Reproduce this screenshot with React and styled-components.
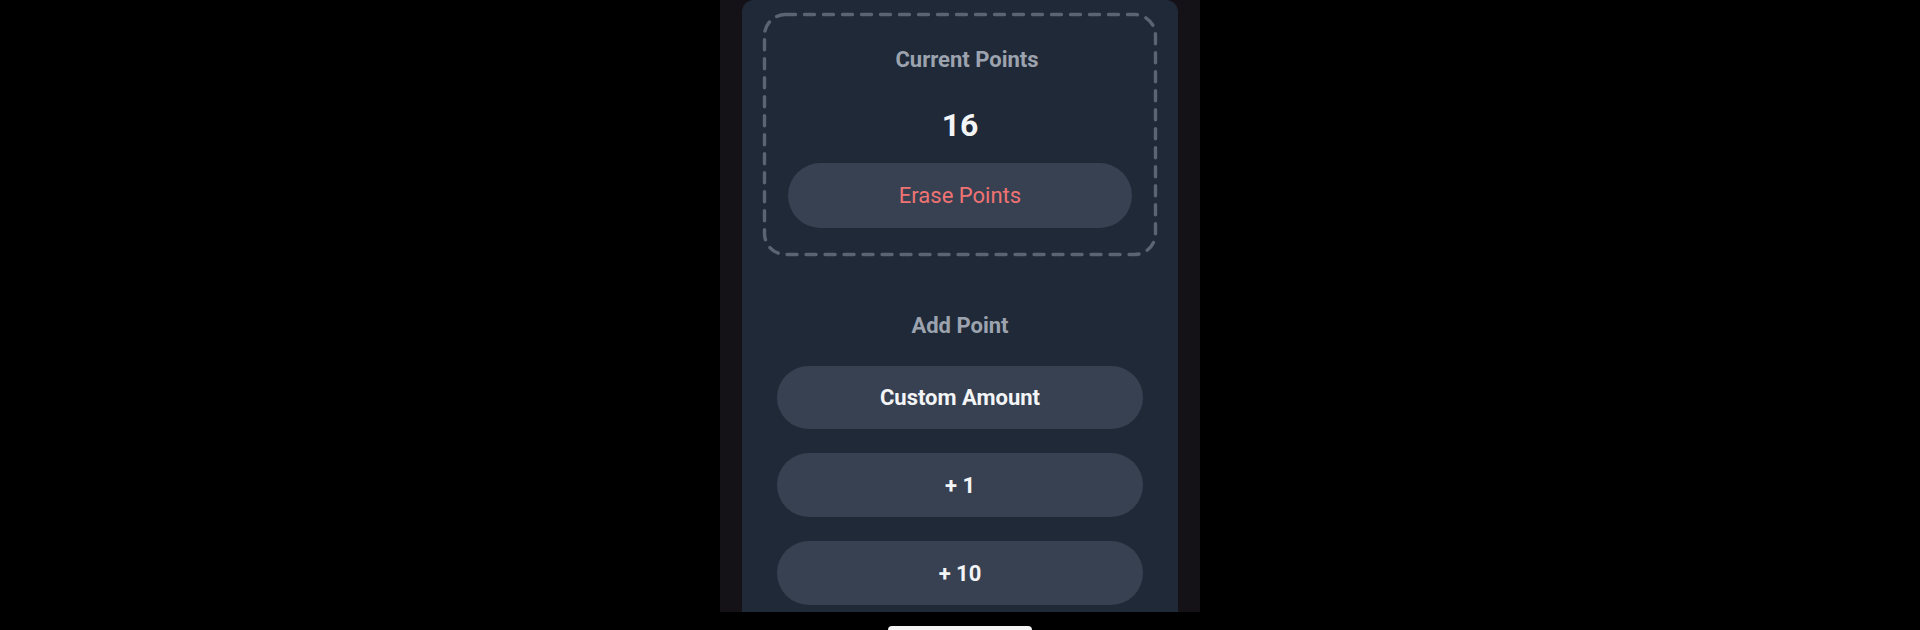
import React from "react";
import styled, { createGlobalStyle } from "styled-components";

const GlobalStyle = createGlobalStyle`
  html, body {
    margin: 0;
    padding: 0;
    background: #000000;
    font-family: Roboto, "Noto Sans", "Liberation Sans", sans-serif;
  }
  * { box-sizing: border-box; }
`;

const Screen = styled.div`
  width: 1920px;
  height: 630px;
  overflow: hidden;
  display: flex;
  flex-direction: column;
  align-items: center;
  background: #000000;
`;

const Frame = styled.div`
  flex-shrink: 0;
  width: 480px;
  height: 612px;
  background: #151217;
  padding: 0 22px;
  display: flex;
`;

const Panel = styled.div`
  flex: 1;
  background: #1f2937;
  border-radius: 12px 12px 0 0;
  padding: 13px 21px 0;
  display: flex;
  flex-direction: column;
  overflow: hidden;
`;

const DashedCard = styled.section`
  position: relative;
  border: 3px solid transparent;
  border-radius: 22px;
  padding: 30px 22px 25px;
  display: flex;
  flex-direction: column;
  align-items: center;
`;

const DashOutline = styled.svg`
  position: absolute;
  top: -3px;
  left: -3px;
  width: calc(100% + 6px);
  height: calc(100% + 6px);
  pointer-events: none;
  overflow: visible;
`;

const DashRect = styled.rect`
  x: 1.5px;
  y: 1.5px;
  width: calc(100% - 3px);
  height: calc(100% - 3px);
  rx: 21px;
  fill: none;
  stroke: #5b6473;
  stroke-width: 3.4px;
  stroke-dasharray: 10 9;
  stroke-linecap: round;
`;

const Label = styled.h2`
  margin: 0;
  margin-left: ${(p) => p.$shift || 0}px;
  font-size: 22px;
  line-height: 28px;
  font-weight: 700;
  color: #9ca3af;
  text-align: center;
`;

const Value = styled.div`
  margin-top: 31px;
  font-size: 32px;
  line-height: 40px;
  font-weight: 700;
  color: #f3f4f6;
  text-align: center;
`;

const PillButton = styled.button`
  width: 100%;
  height: ${(p) => p.$h || 64}px;
  border: none;
  border-radius: 999px;
  background: #374151;
  color: ${(p) => (p.$danger ? "#f07373" : "#f3f4f6")};
  font-family: inherit;
  font-size: 22px;
  font-weight: ${(p) => (p.$danger ? 400 : 700)};
  display: flex;
  align-items: center;
  justify-content: center;
  padding: 0;
  cursor: pointer;
`;

const EraseWrap = styled.div`
  width: 100%;
  margin-top: 18px;
`;

const AddSection = styled.section`
  margin-top: 56px;
  padding: 0 14px;
  display: flex;
  flex-direction: column;
  align-items: stretch;
`;

const ButtonList = styled.div`
  margin-top: 26px;
  display: flex;
  flex-direction: column;
  gap: 24px;
`;

const HomeIndicator = styled.div`
  flex-shrink: 0;
  margin-top: 14px;
  width: 144px;
  height: 8px;
  background: #f5f5f5;
  border-radius: 4px 4px 0 0;
`;

export default function App() {
  const points = 16;
  const amounts = ["Custom Amount", "+ 1", "+ 10"];
  return (
    <>
      <GlobalStyle />
      <Screen>
        <Frame>
          <Panel>
            <DashedCard>
              <DashOutline aria-hidden="true">
                <DashRect />
              </DashOutline>
              <Label $shift={14}>Current Points</Label>
              <Value>{points}</Value>
              <EraseWrap>
                <PillButton $danger $h={65}>Erase Points</PillButton>
              </EraseWrap>
            </DashedCard>
            <AddSection>
              <Label>Add Point</Label>
              <ButtonList>
                {amounts.map((a) => (
                  <PillButton key={a} $h={a === "Custom Amount" ? 63 : 64}>
                    {a}
                  </PillButton>
                ))}
              </ButtonList>
            </AddSection>
          </Panel>
        </Frame>
        <HomeIndicator />
      </Screen>
    </>
  );
}
